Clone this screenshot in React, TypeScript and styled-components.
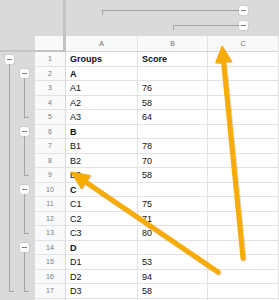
import React from 'react';
import styled, { createGlobalStyle } from 'styled-components';

const ROW_H = 14.5;
const GRAY = '#dadada';
const BAR = '#c4c4c4';
const GRID = '#e2e2e2';
const HEAD_BG = '#f8f9fa';
const GUIDE = '#a3a3a3';
const ORANGE = '#f8ab00';

const GlobalStyle = createGlobalStyle`
	*, *::before, *::after {
		box-sizing: border-box;
	}
	html, body {
		margin: 0;
		padding: 0;
		background: #fff;
		overflow: hidden;
	}
	body {
		font-family: 'Liberation Sans', Arial, sans-serif;
	}
`;

const Sheet = styled.div`
	position: relative;
	width: 279px;
	height: 300px;
	display: grid;
	grid-template-columns: 35px 31px 72px 70px 1fr;
	grid-template-rows: 36px 16px repeat(17, ${ROW_H}px) 1fr;
	overflow: hidden;
	background: #fff;
`;

const CornerBlock = styled.div`
	grid-column: 1 / span 2;
	background: ${GRAY};
	border-right: 3px solid ${BAR};
`;

const BandCell = styled.div`
	background: ${GRAY};
	display: flex;
	flex-direction: column;
	padding-top: 3px;
`;

const HLane = styled.div`
	height: 15px;
	display: flex;
	align-items: center;
`;

const Spacer = styled.div`
	flex: 1;
	align-self: stretch;
`;

const HLine = styled.div`
	flex: 1;
	height: 1px;
	background: ${GUIDE};
`;

const HStart = styled.div`
	flex: 1;
	align-self: flex-start;
	margin-top: 7px;
	height: 5px;
	border-top: 1px solid ${GUIDE};
	border-left: 1px solid ${GUIDE};
`;

const ToggleButton = styled.div`
	flex: none;
	width: 9px;
	height: 9px;
	border-radius: 2px;
	background: #fff;
	box-shadow: 0 0 0 0.5px rgba(0, 0, 0, 0.12);
	display: flex;
	align-items: center;
	justify-content: center;

	&::after {
		content: '';
		width: 5px;
		height: 1px;
		background: #7a7a7a;
	}
`;

const GutterHead = styled.div`
	background: ${GRAY};
	border-bottom: 2px solid ${BAR};
`;

const CornerCell = styled.div`
	background: ${HEAD_BG};
	border-right: 3px solid ${BAR};
	border-bottom: 2px solid ${BAR};
`;

const ColHead = styled.div`
	background: ${HEAD_BG};
	border-right: 1px solid ${GRID};
	border-bottom: 1px solid #d6d6d6;
	color: #6f6f6f;
	font-size: 7px;
	display: flex;
	align-items: center;
	justify-content: center;
`;

const Gutter = styled.div`
	background: ${GRAY};
	display: flex;
	padding-left: 2px;
`;

const VLane = styled.div`
	width: 15px;
	display: flex;
	flex-direction: column;
	align-items: flex-start;
`;

const VLine = styled.div`
	margin-left: 7px;
	width: 1px;
	flex: 1;
	background: ${GUIDE};
`;

const VEnd = styled.div`
	margin-left: 7px;
	width: 5px;
	height: 8px;
	border-left: 1px solid ${GUIDE};
	border-bottom: 1px solid ${GUIDE};
`;

const VButtonWrap = styled.div`
	flex: 1;
	width: 100%;
	display: flex;
	flex-direction: column;
	align-items: flex-start;
`;

const VTop = styled.div`
	flex: 1;
`;

const VButton = styled(ToggleButton)`
	margin-left: 3px;
`;

const RowNum = styled.div`
	background: ${HEAD_BG};
	border-right: 1px solid #d9d9d9;
	border-bottom: 1px solid ${GRID};
	color: #7a7a7a;
	font-size: 7px;
	display: flex;
	align-items: center;
	justify-content: center;
`;

const Cell = styled.div<{ $bold?: boolean }>`
	border-right: 1px solid ${GRID};
	border-bottom: 1px solid ${GRID};
	padding-left: 4px;
	padding-top: 1px;
	font-size: 9px;
	font-weight: ${(p) => (p.$bold ? 700 : 400)};
	color: #111;
	display: flex;
	align-items: center;
	white-space: nowrap;
	overflow: hidden;
`;

const Overlay = styled.svg`
	position: absolute;
	left: 0;
	top: 0;
	width: 279px;
	height: 300px;
	pointer-events: none;
`;

type VKind = 'none' | 'button' | 'line' | 'end';
type HKind = 'none' | 'start' | 'line' | 'end';

const rows: [string, string, boolean][] = [
	['Groups', 'Score', true],
	['A', '', true],
	['A1', '76', false],
	['A2', '58', false],
	['A3', '64', false],
	['B', '', true],
	['B1', '78', false],
	['B2', '70', false],
	['B3', '58', false],
	['C', '', true],
	['C1', '75', false],
	['C2', '71', false],
	['C3', '80', false],
	['D', '', true],
	['D1', '53', false],
	['D2', '94', false],
	['D3', '58', false]
];

const outerKind = (n: number): VKind => (n === 1 ? 'button' : n === 17 ? 'end' : 'line');

const innerKind = (n: number): VKind => {
	if (n === 1) return 'none';
	const pos = (n - 2) % 4;
	if (pos === 0) return 'button';
	if (pos === 3) return 'end';
	return 'line';
};

const VGuide = ({ kind }: { kind: VKind }) => {
	if (kind === 'button') {
		return (
			<VLane>
				<VButtonWrap>
					<VTop />
					<VButton />
					<VLine />
				</VButtonWrap>
			</VLane>
		);
	}
	if (kind === 'line') {
		return (
			<VLane>
				<VLine />
			</VLane>
		);
	}
	if (kind === 'end') {
		return (
			<VLane>
				<VEnd />
			</VLane>
		);
	}
	return <VLane />;
};

const HGuide = ({ kind }: { kind: HKind }) => {
	if (kind === 'start') {
		return (
			<HLane>
				<Spacer />
				<HStart />
			</HLane>
		);
	}
	if (kind === 'line') {
		return (
			<HLane>
				<HLine />
			</HLane>
		);
	}
	if (kind === 'end') {
		return (
			<HLane>
				<HLine />
				<ToggleButton />
				<Spacer />
			</HLane>
		);
	}
	return <HLane />;
};

const columnBands: [HKind, HKind][] = [
	['start', 'none'],
	['line', 'start'],
	['end', 'end']
];

const Arrow = ({ x1, y1, x2, y2, head = 16, half = 8 }: { x1: number; y1: number; x2: number; y2: number; head?: number; half?: number }) => {
	const len = Math.hypot(x2 - x1, y2 - y1);
	const ux = (x2 - x1) / len;
	const uy = (y2 - y1) / len;
	const bx = x2 - ux * head;
	const by = y2 - uy * head;
	const px = -uy;
	const py = ux;
	const pts = `${x2},${y2} ${bx + px * half},${by + py * half} ${bx - px * half},${by - py * half}`;
	return (
		<g filter='url(#shadow)'>
			<line
				x1={x1}
				y1={y1}
				x2={bx + ux * 2}
				y2={by + uy * 2}
				stroke={ORANGE}
				strokeWidth={5}
				strokeLinecap='round'
			/>
			<polygon
				points={pts}
				fill={ORANGE}
				stroke={ORANGE}
				strokeWidth={1}
				strokeLinejoin='round'
			/>
		</g>
	);
};

const App = () => {
	return (
		<>
			<GlobalStyle />
			<Sheet>
				<CornerBlock />
				{columnBands.map(([a, b], i) => (
					<BandCell key={`band-${i}`}>
						<HGuide kind={a} />
						<HGuide kind={b} />
					</BandCell>
				))}

				<GutterHead />
				<CornerCell />
				<ColHead>A</ColHead>
				<ColHead>B</ColHead>
				<ColHead>C</ColHead>

				{rows.map(([a, b, bold], i) => {
					const n = i + 1;
					return (
						<React.Fragment key={n}>
							<Gutter>
								<VGuide kind={outerKind(n)} />
								<VGuide kind={innerKind(n)} />
							</Gutter>
							<RowNum>{n}</RowNum>
							<Cell $bold={bold}>{a}</Cell>
							<Cell $bold={bold}>{b}</Cell>
							<Cell />
						</React.Fragment>
					);
				})}
				<Gutter />
				<RowNum />
				<Cell />
				<Cell />
				<Cell />

				<Overlay viewBox='0 0 279 300'>
					<defs>
						<filter
							id='shadow'
							x='-20%'
							y='-20%'
							width='140%'
							height='140%'
						>
							<feDropShadow
								dx='0.6'
								dy='0.8'
								stdDeviation='0.7'
								floodColor='#000'
								floodOpacity='0.3'
							/>
						</filter>
					</defs>
					<Arrow
						x1={243}
						y1={258}
						x2={222}
						y2={46}
					/>
					<Arrow
						x1={218}
						y1={272}
						x2={71}
						y2={172}
						head={18}
						half={8}
					/>
				</Overlay>
			</Sheet>
		</>
	);
};

export default App;
